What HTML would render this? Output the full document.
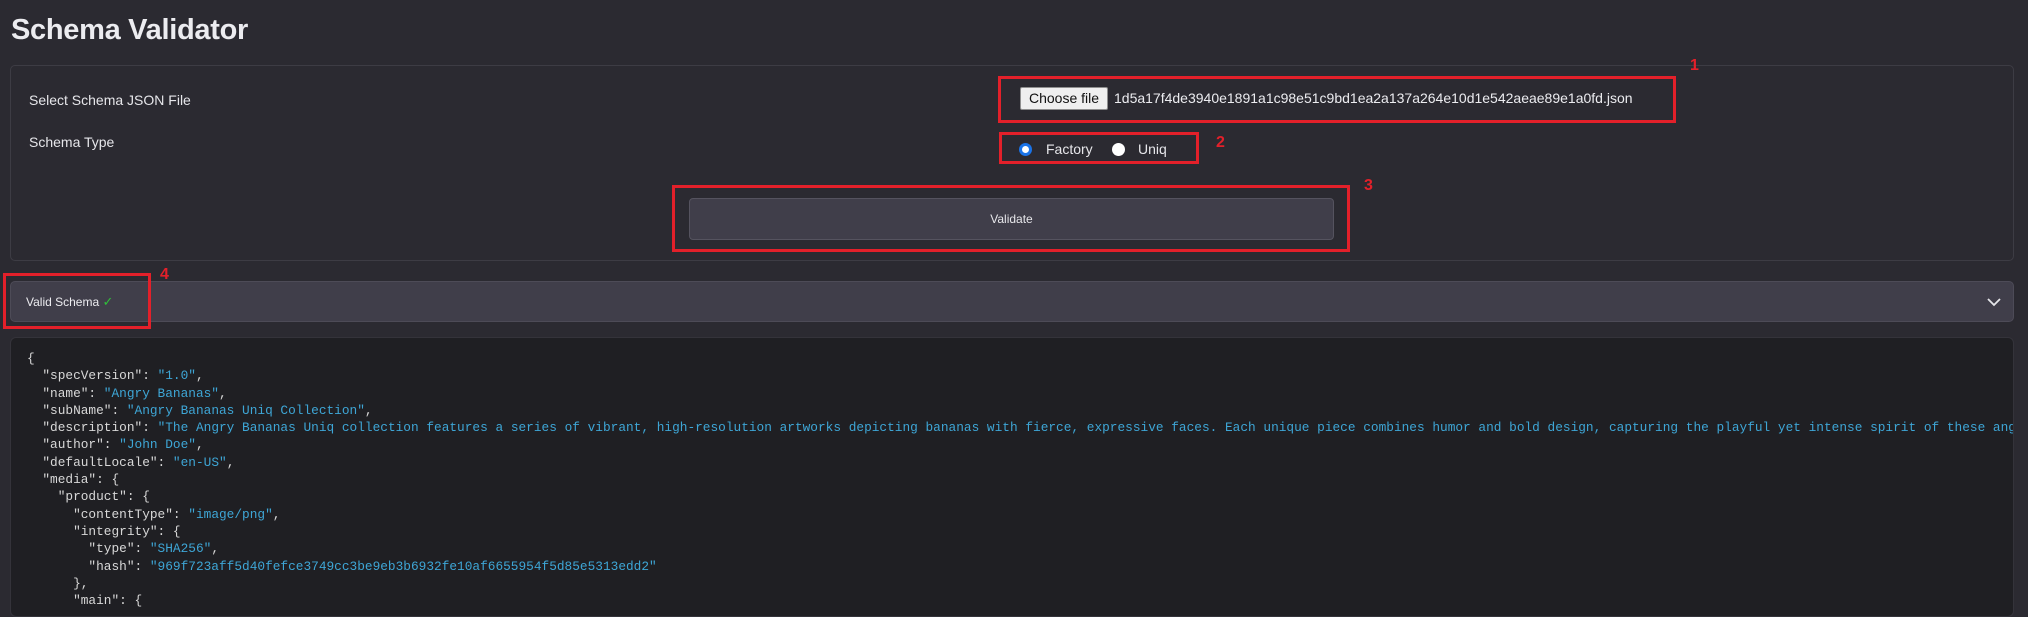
<!DOCTYPE html>
<html><head><meta charset="utf-8"><style>
*{box-sizing:border-box;margin:0;padding:0}
body{width:2028px;height:603px;overflow:hidden;background:#2b2a31;font-family:"Liberation Sans",sans-serif;color:#e6e6ea;position:relative}
.abs{position:absolute}
h1{position:absolute;left:11px;top:14px;font-size:29px;font-weight:bold;color:#ececf0;letter-spacing:-0.3px}
.card{left:10px;top:65px;width:2004px;height:196px;border:1px solid #3d3c44;border-radius:5px;background:#2b2a31}
.lbl{font-size:14px;color:#e6e6ea}
.red{border:3px solid #e3202a}
.num{color:#e3202a;font-size:16px;font-weight:bold}
.btn{left:689px;top:198px;width:645px;height:42px;background:#403e4a;border:1px solid #55535f;border-radius:4px;font-size:12px;color:#e6e6ea;text-align:center;line-height:40px}
.acc{left:10px;top:281px;width:2004px;height:41px;background:#403e4a;border:1px solid #4d4b57;border-radius:5px}
.code{left:10px;top:337px;width:2004px;height:280px;background:#1f1f23;border:1px solid #34333a;border-radius:6px;overflow:hidden}
pre{position:absolute;left:16px;top:12px;font-family:"Liberation Mono",monospace;font-size:12.8px;line-height:17.3px;color:#d8d8d8;white-space:pre}
.s{color:#3ea6d6}
</style></head><body>
<h1>Schema Validator</h1>
<div class="abs card"></div>
<div class="abs lbl" style="left:29px;top:92px">Select Schema JSON File</div>
<div class="abs lbl" style="left:29px;top:134px">Schema Type</div>

<div class="abs red" style="left:998px;top:76px;width:678px;height:47px"></div>
<div class="abs num" style="left:1690px;top:57px">1</div>
<div class="abs" style="left:1020px;top:87px;width:88px;height:23px;background:#efefef;border:1px solid #8f8f8f;border-radius:2px;color:#111;font-size:14px;text-align:center;line-height:21px">Choose file</div>
<div class="abs" style="left:1114px;top:90px;font-size:14px;color:#ececf0">1d5a17f4de3940e1891a1c98e51c9bd1ea2a137a264e10d1e542aeae89e1a0fd.json</div>

<div class="abs red" style="left:999px;top:132px;width:200px;height:32px"></div>
<div class="abs num" style="left:1216px;top:134px">2</div>
<div class="abs" style="left:1019px;top:143px;width:13px;height:13px;border-radius:50%;border:3px solid #1a73e8;background:#fff"></div>
<div class="abs lbl" style="left:1046px;top:141px">Factory</div>
<div class="abs" style="left:1112px;top:143px;width:13px;height:13px;border-radius:50%;background:#fff"></div>
<div class="abs lbl" style="left:1138px;top:141px">Uniq</div>

<div class="abs btn">Validate</div>
<div class="abs red" style="left:672px;top:185px;width:678px;height:67px"></div>
<div class="abs num" style="left:1364px;top:177px">3</div>

<div class="abs acc"></div>
<div class="abs" style="left:26px;top:294px;font-size:12px;color:#ececf0">Valid Schema <span style="color:#2fbf3a;font-size:13px">&#10003;</span></div>
<svg class="abs" style="left:1986px;top:297px" width="16" height="10" viewBox="0 0 16 10"><path d="M2 2l6 6 6-6" fill="none" stroke="#e6e6ea" stroke-width="1.8"/></svg>
<div class="abs red" style="left:3px;top:273px;width:148px;height:56px"></div>
<div class="abs num" style="left:160px;top:266px">4</div>

<div class="abs code"><pre>{
  "specVersion": <span class="s">"1.0"</span>,
  "name": <span class="s">"Angry Bananas"</span>,
  "subName": <span class="s">"Angry Bananas Uniq Collection"</span>,
  "description": <span class="s">"The Angry Bananas Uniq collection features a series of vibrant, high-resolution artworks depicting bananas with fierce, expressive faces. Each unique piece combines humor and bold design, capturing the playful yet intense spirit of these angry bananas."</span>,
  "author": <span class="s">"John Doe"</span>,
  "defaultLocale": <span class="s">"en-US"</span>,
  "media": {
    "product": {
      "contentType": <span class="s">"image/png"</span>,
      "integrity": {
        "type": <span class="s">"SHA256"</span>,
        "hash": <span class="s">"969f723aff5d40fefce3749cc3be9eb3b6932fe10af6655954f5d85e5313edd2"</span>
      },
      "main": {
</pre></div>
</body></html>
